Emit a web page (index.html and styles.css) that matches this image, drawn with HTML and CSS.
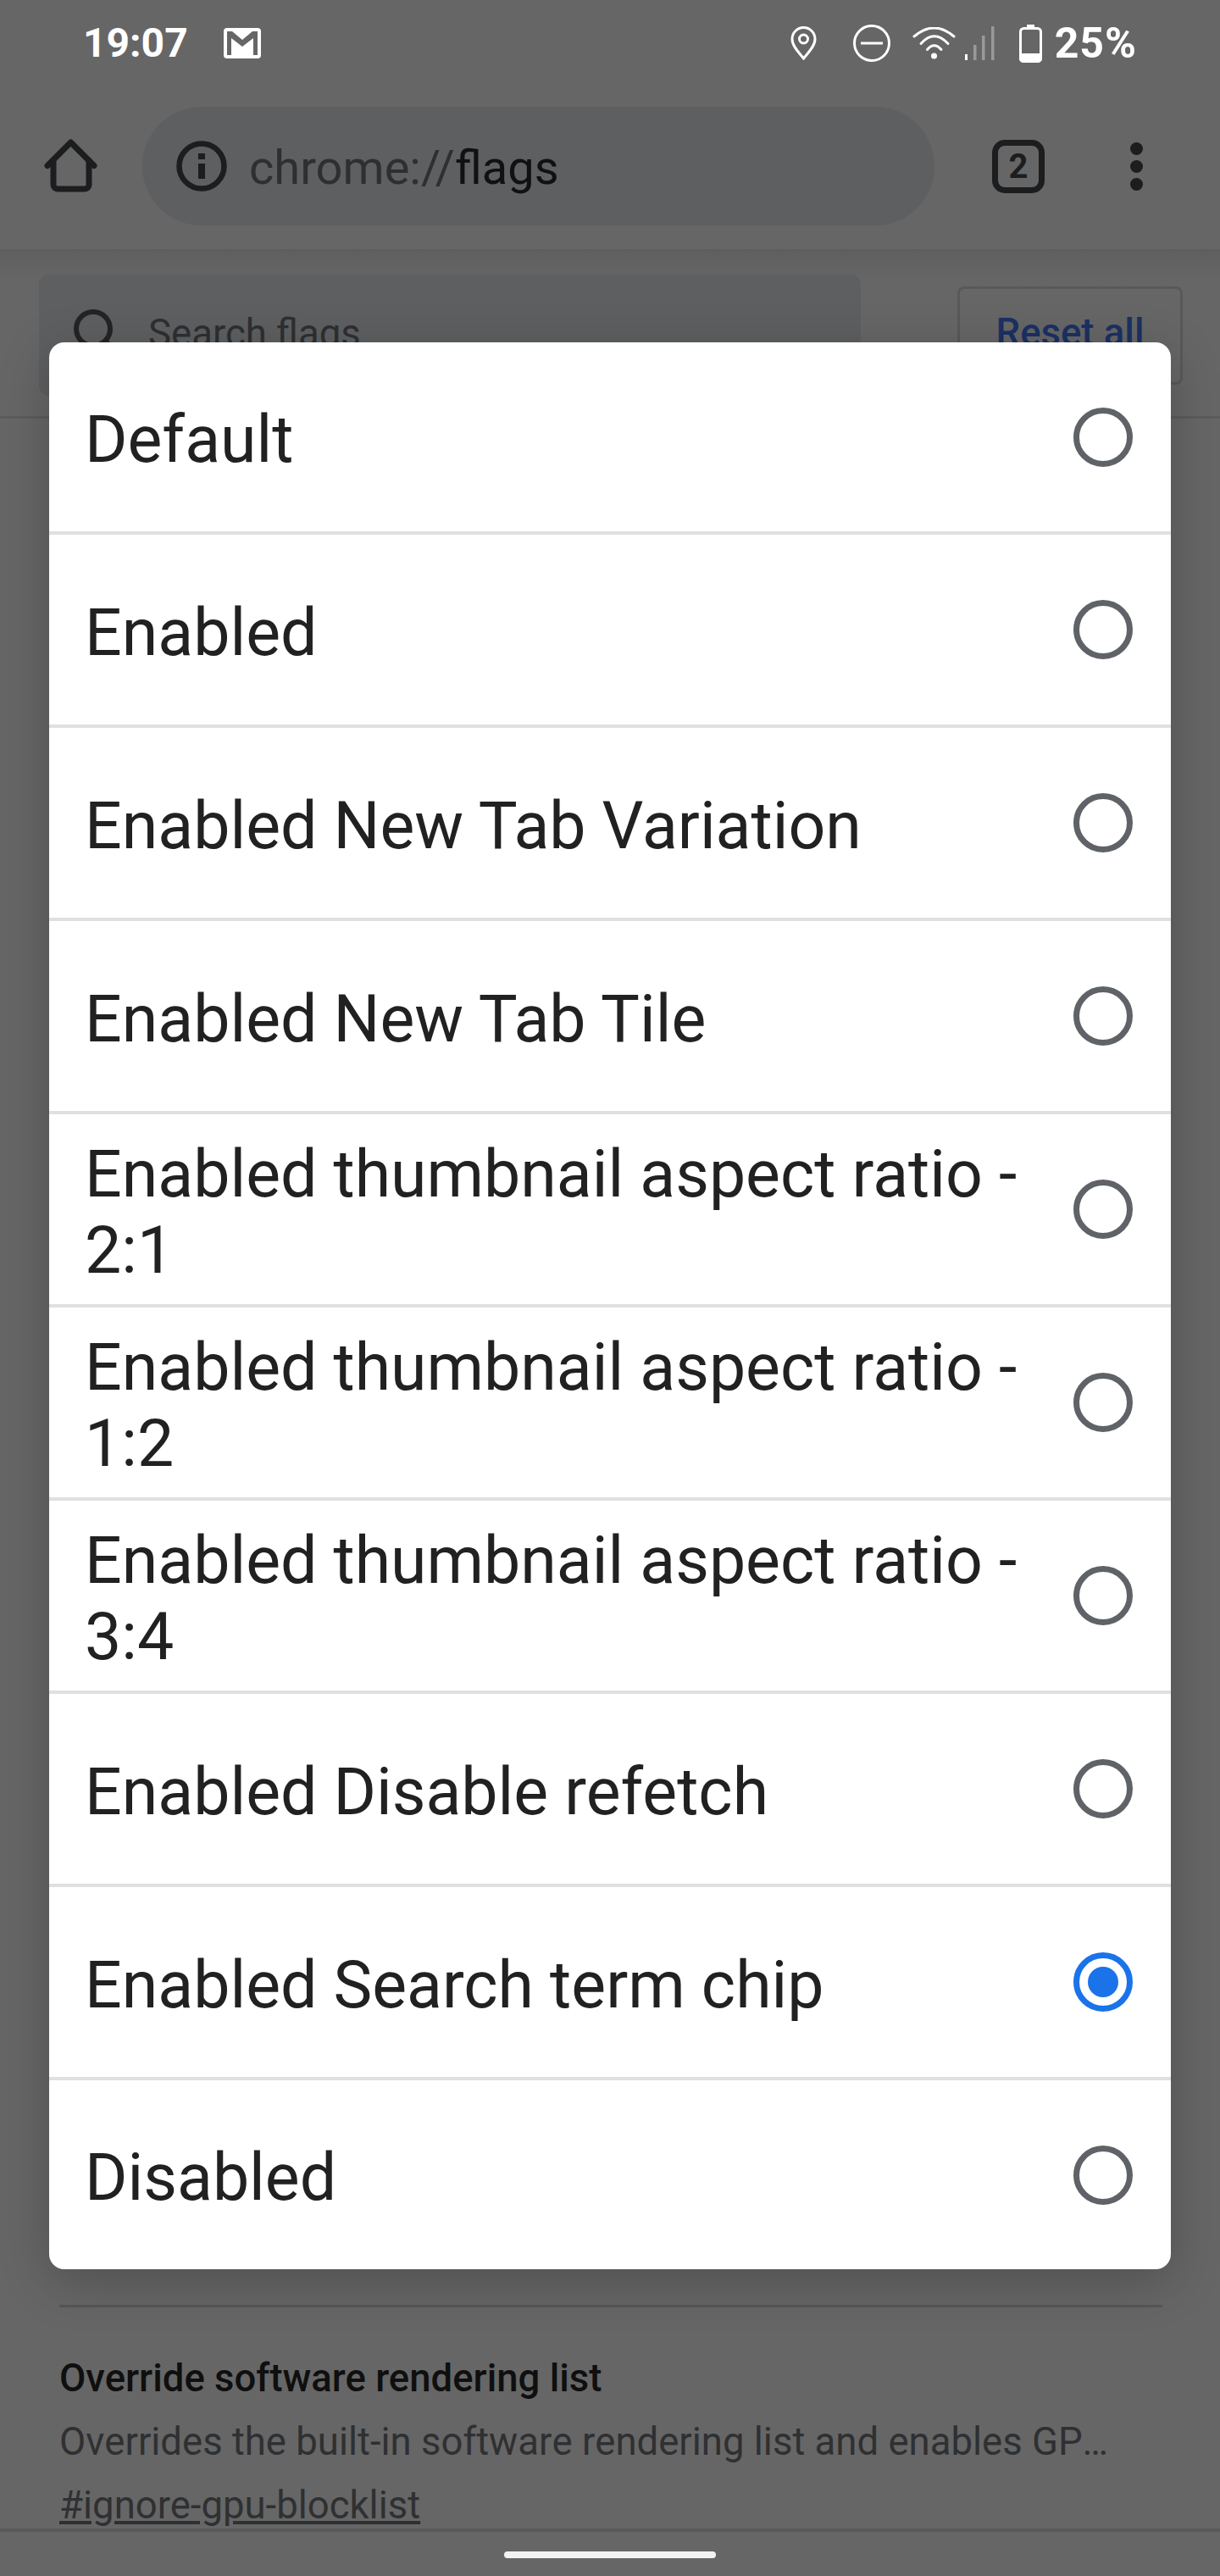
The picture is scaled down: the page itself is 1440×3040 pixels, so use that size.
FILE: index.html
```html
<!DOCTYPE html>
<html lang="en">
<head>
    <meta charset="UTF-8">
    <meta name="viewport" content="width=device-width, initial-scale=1.0">
    <title>chrome://flags</title>
    <link rel="stylesheet" href="styles.css">
</head>
<body>
    <div class="status-bar">
        <span class="clock">19:07</span>
        <svg class="icon-mail" width="44" height="36" viewBox="0 0 44 36">
            <rect width="44" height="36" rx="4" fill="#fff"/>
            <path d="M4 4h6l12 10L34 4h6v28h-5V12L22 22 9 12v20H4z" fill="#666"/>
        </svg>
        <div class="status-icons">
            <svg class="icon-pin" width="31" height="40" viewBox="0 0 31 40" fill="none" stroke="#fff" stroke-width="3">
                <path d="M15.5 38C11 32 2 24 2 15a13.5 13.5 0 0 1 27 0C29 24 20 32 15.5 38z"/>
                <circle cx="15.5" cy="15" r="5"/>
            </svg>
            <svg class="icon-dnd" width="44" height="44" viewBox="0 0 44 44" fill="none" stroke="#fff" stroke-width="3">
                <circle cx="22" cy="22" r="20.5"/>
                <path d="M9 22h26"/>
            </svg>
            <svg class="icon-wifi" width="51" height="38" viewBox="0 0 51 38" fill="none" stroke="#fff" stroke-width="3" stroke-linecap="round">
                <path d="M2 11Q25.5-9 49 11"/>
                <path d="M10 19.5Q25.5 2 42 19.5"/>
                <path d="M17.500 26.500Q25.500 17 34 26.500"/>
                <circle cx="25.500" cy="34" r="3.500" fill="#fff" stroke="none"/>
            </svg>
            <svg class="icon-signal" width="36" height="41" viewBox="0 0 36 41">
                <rect x="1" y="33" width="3" height="7" fill="#fff"/>
                <rect x="11" y="22" width="3.500" height="18" fill="#999"/>
                <rect x="21" y="11" width="3.500" height="29" fill="#999"/>
                <rect x="32" y="0" width="3.500" height="40" fill="#999"/>
            </svg>
            <svg class="icon-battery" width="27" height="45" viewBox="0 0 27 45">
                <path d="M9 0h9v3H9z" fill="#fff"/>
                <rect x="1.500" y="4.500" width="24" height="39" rx="4" fill="none" stroke="#fff" stroke-width="3"/>
                <path d="M0 34h27v6a5 5 0 0 1-5 5H5a5 5 0 0 1-5-5z" fill="#fff"/>
            </svg>
            <span class="battery-level">25%</span>
        </div>
    </div>

    <div class="toolbar">
        <svg class="icon-home" width="64" height="64" viewBox="0 0 64 64" fill="none" stroke="#1c1d1f" stroke-width="7" stroke-linecap="round" stroke-linejoin="round">
            <path d="M4 31.500L31.500 4 59 31.500"/>
            <path d="M11 26v28a5 5 0 0 0 5 5h32a5 5 0 0 0 5-5V26"/>
        </svg>
        <div class="omnibox">
            <svg class="icon-info" width="60" height="60" viewBox="0 0 60 60" fill="none">
                <circle cx="30" cy="30" r="26.500" stroke="#1c1d1f" stroke-width="6.500"/>
                <path d="M26 15h8v7h-8zM26 27h8v18h-8z" fill="#1c1d1f"/>
            </svg>
            <span class="url"><span class="url-scheme">chrome://</span>flags</span>
        </div>
        <div class="tab-count">2</div>
        <div class="menu-dots"><i></i><i></i><i></i></div>
    </div>

    <div class="flags-header">
        <div class="search-box">
            <svg class="icon-search" width="60" height="60" viewBox="0 0 60 60" fill="none" stroke="#222426" stroke-width="6">
                <circle cx="23" cy="23" r="20"/>
                <path d="M37 37l18 18"/>
            </svg>
            <span class="search-text">Search flags</span>
        </div>
        <div class="reset-btn">Reset all</div>
    </div>

    <div class="flags-list">
        <div class="flag-entry">
            <div class="flag-title">Override software rendering list</div>
            <div class="flag-desc">Overrides the built-in software rendering list and enables GP…</div>
            <div class="flag-link">#ignore-gpu-blocklist</div>
        </div>
    </div>

    <div class="nav-bar"><div class="nav-pill"></div></div>

    <div class="dialog">
        <div class="option"><span class="option-label">Default</span><span class="radio"></span></div>
        <div class="option"><span class="option-label">Enabled</span><span class="radio"></span></div>
        <div class="option"><span class="option-label">Enabled New Tab Variation</span><span class="radio"></span></div>
        <div class="option"><span class="option-label">Enabled New Tab Tile</span><span class="radio"></span></div>
        <div class="option"><span class="option-label">Enabled thumbnail aspect ratio - 2:1</span><span class="radio"></span></div>
        <div class="option"><span class="option-label">Enabled thumbnail aspect ratio - 1:2</span><span class="radio"></span></div>
        <div class="option"><span class="option-label">Enabled thumbnail aspect ratio - 3:4</span><span class="radio"></span></div>
        <div class="option"><span class="option-label">Enabled Disable refetch</span><span class="radio"></span></div>
        <div class="option"><span class="option-label">Enabled Search term chip</span><span class="radio checked"></span></div>
        <div class="option"><span class="option-label">Disabled</span><span class="radio"></span></div>
    </div>
</body>
</html>
```
FILE: styles.css
```css
html, body {
    margin: 0;
    height: 3040px;
    overflow: hidden;
}
body {
    position: relative;
    display: flex;
    flex-direction: column;
    background-color: #666;
    font-family: Roboto, "Liberation Sans", sans-serif;
}
svg {
    display: block;
    flex: none;
}

/* status bar */
.status-bar {
    display: flex;
    align-items: center;
    height: 102px;
    padding: 0 98px 0 98px;
    color: #fff;
}
.clock {
    font-size: 48px;
    font-weight: 700;
    line-height: 100px;
}
.icon-mail {
    margin-left: 42px;
}
.status-icons {
    display: flex;
    align-items: center;
    margin-left: auto;
}
.icon-dnd {
    margin-left: 43px;
}
.icon-wifi {
    margin-left: 26px;
}
.icon-signal {
    margin-left: 10px;
}
.icon-battery {
    margin-left: 29px;
}
.battery-level {
    margin-left: 15px;
    font-size: 50px;
    font-weight: 700;
    letter-spacing: 1px;
}

/* toolbar */
.toolbar {
    display: flex;
    align-items: center;
    height: 192px;
    padding: 0 0 4px 52px;
    box-sizing: border-box;
}
.omnibox {
    display: flex;
    align-items: center;
    width: 935px;
    height: 140px;
    margin-left: 52px;
    padding-left: 40px;
    box-sizing: border-box;
    border-radius: 70px;
    background-color: #5e5f61;
}
.url {
    margin-left: 26px;
    padding-top: 3px;
    font-size: 56px;
    color: #111;
}
.url-scheme {
    color: #2e2f31;
}
.tab-count {
    width: 62px;
    height: 63px;
    margin-left: 68px;
    box-sizing: border-box;
    border: 7px solid #1c1d1f;
    border-radius: 15px;
    font-size: 40px;
    font-weight: 700;
    line-height: 49px;
    text-align: center;
    color: #1c1d1f;
}
.menu-dots {
    display: flex;
    flex-direction: column;
    gap: 6px;
    margin-left: 101px;
}
.menu-dots i {
    width: 15px;
    height: 15px;
    border-radius: 50%;
    background-color: #1c1d1f;
}

/* page header behind the dialog */
.flags-header {
    display: flex;
    align-items: flex-start;
    height: 200px;
    padding: 28px 44px 0 46px;
    box-sizing: border-box;
    border-top: 2px solid #5e5e5e;
    border-bottom: 3px solid #5c5c5c;
    background: linear-gradient(#5f5f5f, #666 36px);
}
.search-box {
    display: flex;
    align-items: center;
    width: 970px;
    height: 143px;
    padding-left: 41px;
    box-sizing: border-box;
    border-radius: 12px;
    background-color: #5e5f61;
}
.icon-search {
    align-self: flex-start;
    margin-top: 41px;
}
.search-text {
    margin: 0 0 4px -16px;
    padding-left: 44px;
    font-size: 45.5px;
    color: #2e2f31;
}
.reset-btn {
    width: 266px;
    height: 116px;
    margin: 14px 0 0 114px;
    box-sizing: border-box;
    border: 3px solid #58595b;
    border-radius: 8px;
    font-size: 45.5px;
    font-weight: 500;
    line-height: 104px;
    text-align: center;
    color: #1b3163;
}

/* flag entry under the dialog */
.flags-list {
    flex: 1;
    display: flex;
    flex-direction: column;
    justify-content: flex-end;
    overflow: hidden;
}
.flag-entry {
    margin: 0 68px 0 70px;
    padding-top: 46px;
    border-top: 3px solid #565656;
    font-size: 45.5px;
    line-height: 75px;
    height: 215px;
    overflow: hidden;
}
.flag-title {
    font-weight: 500;
    color: #0f0f0f;
}
.flag-desc {
    font-kerning: none;
    color: #2f3032;
}
.flag-link {
    text-decoration: underline;
    color: #2f3032;
}
.nav-bar {
    height: 56px;
    padding-top: 23px;
    box-sizing: border-box;
    border-top: 4px solid #595959;
}
.nav-pill {
    width: 250px;
    height: 8px;
    margin: 0 auto;
    border-radius: 4px;
    background-color: #f2f2f2;
}

/* select dialog */
.dialog {
    position: absolute;
    top: 404px;
    left: 58px;
    width: 1324px;
    border-radius: 18px;
    background-color: #fff;
    box-shadow: 0 14px 60px rgba(0, 0, 0, 0.22);
}
.option {
    display: flex;
    align-items: center;
    height: 228px;
    padding: 0 45px 0 42px;
    box-sizing: border-box;
    border-bottom: 4px solid #e0e0e0;
}
.option:first-child {
    height: 227px;
}
.option:last-child {
    height: 223px;
    border-bottom: none;
}
.option-label {
    flex: 1;
    padding-top: 7px;
    font-size: 77px;
    line-height: 90px;
    color: #212121;
}
.radio {
    flex: none;
    width: 70px;
    height: 70px;
    margin-left: 38px;
    box-sizing: border-box;
    border: 7px solid #5f6368;
    border-radius: 50%;
}
.radio.checked {
    border-color: #1a73e8;
    padding: 10px;
}
.radio.checked::after {
    content: "";
    display: block;
    width: 36px;
    height: 36px;
    border-radius: 50%;
    background-color: #1a73e8;
}
```
